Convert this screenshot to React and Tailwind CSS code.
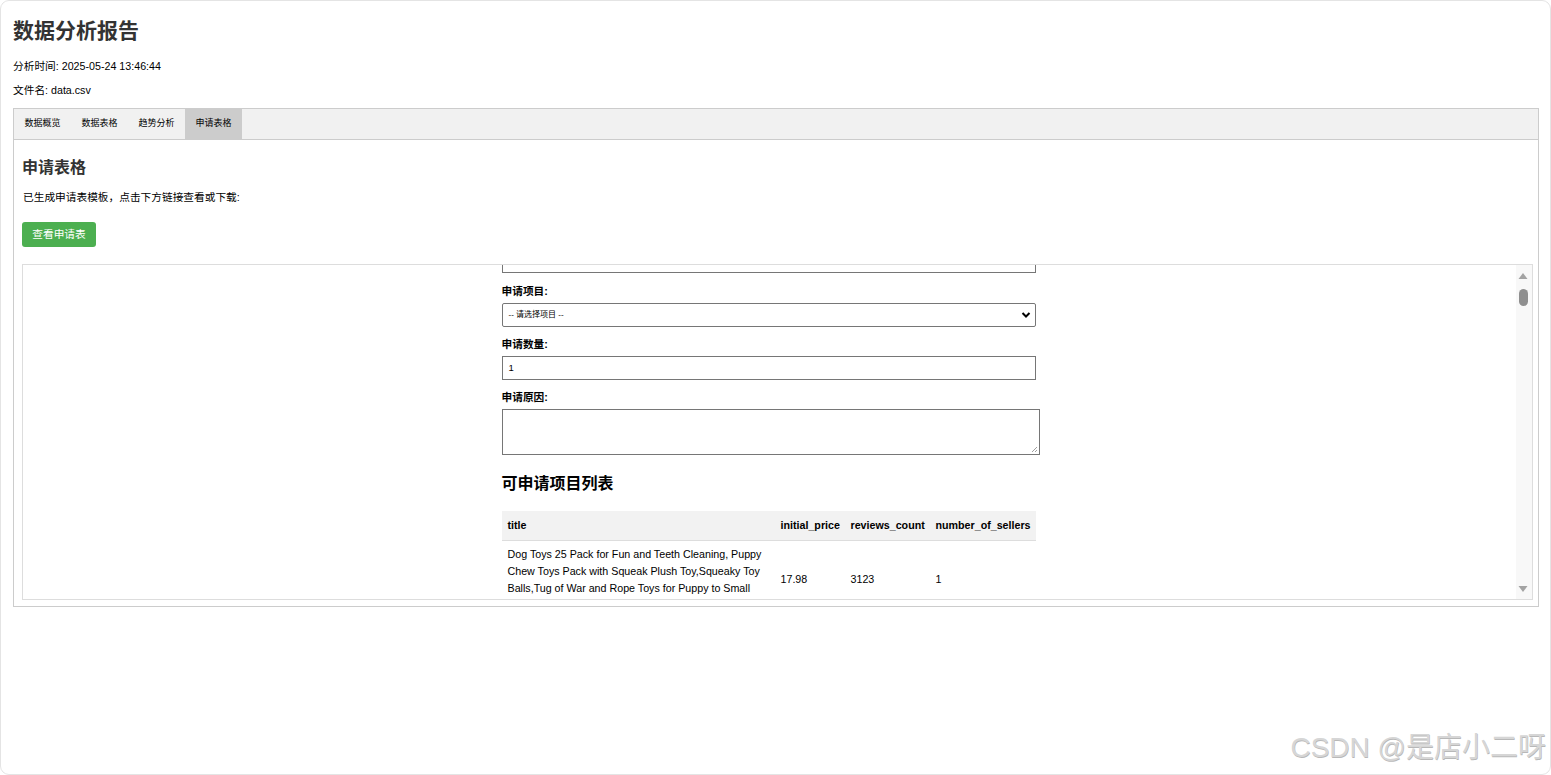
import React from "react";

const FONT = { fontFamily: '"Liberation Sans", Arial, "Noto Sans CJK SC", sans-serif' };

function Scrollbar() {
  return (
    <div className="w-[16px] shrink-0 bg-[#f8f8f8] flex flex-col items-start pl-[2px]">
      <svg width="10" height="8" viewBox="0 0 10 8" className="mt-[7px]">
        <polygon points="5,1 9.5,7 0.5,7" fill="#a3a3a3" />
      </svg>
      <div className="mt-[9px] ml-[1px] w-[9px] h-[17px] rounded-full bg-[#8f8f8f]" />
      <div className="flex-1" />
      <svg width="10" height="8" viewBox="0 0 10 8" className="mb-[6px]">
        <polygon points="0.5,1 9.5,1 5,7" fill="#a3a3a3" />
      </svg>
    </div>
  );
}

function FrameContent() {
  const label = "block text-[10.7px] leading-[14px] font-bold text-black mb-[5px]";
  const box = "w-[534px] h-[24px] border border-[#767676] bg-white";
  return (
    <div className="flex-1 overflow-hidden">
      <div className="w-[538px] mx-auto -mt-[16px] pl-[1px]">
        <div className={box} />
        <div className="mt-[11px]">
          <span className={label}>申请项目:</span>
          <div className={box + " rounded-[2px] flex items-center justify-between pl-[6px] pr-[4px]"}>
            <span className="text-[8px] text-black">-- 请选择项目 --</span>
            <svg width="10" height="8" viewBox="0 0 10 8">
              <path d="M1.5 2 L5 5.5 L8.5 2" fill="none" stroke="#000" strokeWidth="2" />
            </svg>
          </div>
        </div>
        <div className="mt-[10px]">
          <span className={label}>申请数量:</span>
          <div className={box + " flex items-center pl-[6px]"}>
            <span className="text-[9.5px] text-black">1</span>
          </div>
        </div>
        <div className="mt-[10px]">
          <span className={label}>申请原因:</span>
          <div className="relative w-[538px] h-[46px] border border-[#767676] bg-white">
            <svg width="7" height="7" viewBox="0 0 7 7" className="absolute right-[1px] bottom-[1px]">
              <path d="M6 1 L1 6 M6 4 L4 6" stroke="#888" strokeWidth="0.8" />
            </svg>
          </div>
        </div>
        <h3 className="mt-[19px] text-[16px] leading-[20px] font-bold text-black">可申请项目列表</h3>
        <table className="mt-[17px] w-[534px] border-collapse text-[10.7px] text-black table-fixed">
          <colgroup>
            <col className="w-[273px]" />
            <col className="w-[70px]" />
            <col className="w-[85px]" />
            <col className="w-[106px]" />
          </colgroup>
          <thead>
            <tr className="bg-[#f2f2f2] h-[29px] border-b border-[#ddd]">
              <th className="text-left font-bold px-[6px] whitespace-nowrap">title</th>
              <th className="text-left font-bold px-[6px] whitespace-nowrap">initial_price</th>
              <th className="text-left font-bold px-[6px] whitespace-nowrap">reviews_count</th>
              <th className="text-left font-bold px-[6px] whitespace-nowrap">number_of_sellers</th>
            </tr>
          </thead>
          <tbody>
            <tr className="border-b border-[#ddd] leading-[17px]">
              <td className="px-[6px] py-[5px] align-middle">
                Dog Toys 25 Pack for Fun and Teeth Cleaning, Puppy Chew Toys Pack with Squeak Plush Toy,Squeaky Toy Balls,Tug of War and Rope Toys for Puppy to Small Dogs
              </td>
              <td className="px-[6px] py-[5px] align-middle">17.98</td>
              <td className="px-[6px] py-[5px] align-middle">3123</td>
              <td className="px-[6px] py-[5px] align-middle">1</td>
            </tr>
          </tbody>
        </table>
      </div>
    </div>
  );
}

export default function App() {
  const tabs = ["数据概览", "数据表格", "趋势分析", "申请表格"];
  return (
    <div
      style={FONT}
      className="relative h-[775px] w-[1551px] overflow-hidden bg-white border border-[#e4e4e4] rounded-[9px] px-[12px] text-[#333]"
    >
      <h1 className="pt-[18px] text-[21px] leading-[24px] font-bold text-[#333]">数据分析报告</h1>
      <p className="mt-[16px] text-[10.7px] leading-[14px] text-black">分析时间: 2025-05-24 13:46:44</p>
      <p className="mt-[10px] text-[10.7px] leading-[14px] text-black">文件名: data.csv</p>

      <div className="mt-[11px] w-[1526px] border border-[#ccc]">
        <div className="flex h-[31px] bg-[#f1f1f1] border-b border-[#ccc]">
          {tabs.map((t, i) => (
            <div
              key={t}
              className={
                "h-[30px] w-[57px] flex items-center justify-center text-[9px] text-black " +
                (i === 3 ? "bg-[#cccccc]" : "")
              }
            >
              {t}
            </div>
          ))}
        </div>
        <div className="px-[8px] pb-[6px]">
          <h3 className="mt-[18px] text-[16px] leading-[20px] font-bold text-[#333]">申请表格</h3>
          <p className="mt-[12px] pl-[1px] text-[10.7px] leading-[14px] text-black">
            已生成申请表模板，点击下方链接查看或下载:
          </p>
          <button className="mt-[18px] h-[25px] w-[74px] rounded-[3px] bg-[#4caf50] text-white text-[10.7px] flex items-center justify-center">
            查看申请表
          </button>
          <div className="mt-[17px] w-[1511px] h-[336px] border border-[#ddd] flex bg-white">
            <FrameContent />
            <Scrollbar />
          </div>
        </div>
      </div>

      <div
        className="absolute right-[4px] bottom-[10px] text-[28px] leading-[32px] font-normal text-[#d6d6d6] whitespace-nowrap"
        style={{ textShadow: "0.5px 0.5px 0.5px #b8b8b8" }}
      >
        CSDN @是店小二呀
      </div>
    </div>
  );
}
